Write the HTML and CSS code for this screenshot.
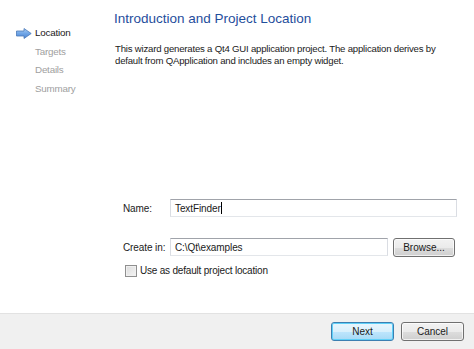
FILE: index.html
```html
<!DOCTYPE html>
<html lang="en">
<head>
    <meta charset="UTF-8">
    <title>Introduction and Project Location</title>
    <link rel="stylesheet" href="styles.css">
</head>
<body>
    <div class="wizard">
        <div class="content">
            <div class="steps">
                <div class="step current">
                    <svg class="step-arrow" width="16" height="11" viewBox="0 0 16 11" xmlns="http://www.w3.org/2000/svg">
                        <defs>
                            <linearGradient id="arrowFill" x1="0" y1="0" x2="0" y2="1">
                                <stop offset="0" stop-color="#a9cdf5"/>
                                <stop offset="0.5" stop-color="#6fa5e6"/>
                                <stop offset="1" stop-color="#4d86d4"/>
                            </linearGradient>
                        </defs>
                        <path d="M0.5 3 H8 V0.5 L15.2 5.5 L8 10.5 V8 H0.5 Z" fill="url(#arrowFill)" stroke="#4a78b8" stroke-width="0.8" stroke-linejoin="round"/>
                    </svg>
                    <span>Location</span>
                </div>
                <div class="step">Targets</div>
                <div class="step">Details</div>
                <div class="step">Summary</div>
            </div>
            <div class="page">
                <h1 class="page-title">Introduction and Project Location</h1>
                <p class="page-desc">This wizard generates a Qt4 GUI application project. The application derives by default from QApplication and includes an empty widget.</p>
                <div class="form">
                    <div class="form-row name-row">
                        <label class="form-label">Name:</label>
                        <div class="field field-name">TextFinder<span class="caret"></span></div>
                    </div>
                    <div class="form-row path-row">
                        <label class="form-label">Create in:</label>
                        <div class="field field-path">C:\Qt\examples</div>
                        <button class="btn">Browse...</button>
                    </div>
                    <div class="form-row check-row">
                        <span class="checkbox"></span>
                        <span>Use as default project location</span>
                    </div>
                </div>
            </div>
        </div>
        <div class="footer">
            <button class="btn btn-default">Next</button>
            <button class="btn">Cancel</button>
        </div>
    </div>
</body>
</html>
```

FILE: styles.css
```css
* {
    margin: 0;
    padding: 0;
    box-sizing: border-box;
}

body {
    font-family: "Liberation Sans", Arial, sans-serif;
    font-size: 10px;
    letter-spacing: -0.1px;
    color: #1a1a1a;
    background: #fff;
    width: 474px;
    height: 349px;
    overflow: hidden;
}

.wizard {
    display: flex;
    flex-direction: column;
    height: 349px;
}

.content {
    flex: 1;
    display: flex;
    flex-direction: row;
}

.steps {
    width: 114px;
    padding-top: 24px;
    display: flex;
    flex-direction: column;
}

.step {
    height: 18.5px;
    line-height: 18.5px;
    padding-left: 35px;
    color: #a0a0a0;
    font-size: 9.8px;
    letter-spacing: -0.2px;
}

.step.current {
    display: flex;
    align-items: center;
    padding-left: 16px;
    color: #1a1a1a;
}

.step-arrow {
    margin-right: 3px;
}

.page {
    flex: 1;
    display: flex;
    flex-direction: column;
    padding-top: 10px;
    padding-right: 16px;
}

.page-title {
    font-size: 13.5px;
    font-weight: normal;
    letter-spacing: 0;
    color: #1f4e9c;
    line-height: 18px;
}

.page-desc {
    margin-top: 15px;
    line-height: 12px;
    padding-left: 1px;
    padding-right: 12px;
    font-size: 9.6px;
    letter-spacing: -0.2px;
}

.form {
    margin-top: 132px;
    padding-left: 9px;
    display: flex;
    flex-direction: column;
}

.form-row {
    display: flex;
    align-items: center;
}

.name-row {
    height: 18px;
}

.path-row {
    margin-top: 21px;
    height: 18px;
}

.check-row {
    margin-top: 8px;
    height: 13px;
    padding-left: 2px;
    letter-spacing: -0.2px;
}

.form-label {
    width: 47px;
    color: #1a1a1a;
}

.field {
    height: 18px;
    border: 1px solid #abadb3;
    border-top-color: #a0a3aa;
    border-left-color: #dadde3;
    border-right-color: #dadde3;
    border-bottom-color: #e3e6ea;
    background: #fff;
    padding-left: 4px;
    display: flex;
    align-items: center;
}

.field-name {
    width: 287px;
}

.field-path {
    width: 218px;
}

.caret {
    width: 1px;
    height: 12px;
    background: #000;
}

.btn {
    font-family: "Liberation Sans", Arial, sans-serif;
    font-size: 10px;
    color: #1a1a1a;
    height: 19px;
    width: 63px;
    border: 1px solid #707070;
    border-radius: 3px;
    background: linear-gradient(to bottom, #f2f2f2 0%, #ebebeb 50%, #dddddd 51%, #cfcfcf 100%);
    box-shadow: inset 0 0 0 1px rgba(255, 255, 255, 0.7);
}

.path-row .btn {
    margin-left: 5px;
    width: 62px;
}

.checkbox {
    width: 12px;
    height: 12px;
    border: 1px solid #8f8f8f;
    background: linear-gradient(135deg, #dcdcdc 0%, #f4f4f4 100%);
    box-shadow: inset 0 0 0 1px #f0f0f0;
    margin-right: 3px;
}

.footer {
    height: 36px;
    background: #f0f0f0;
    border-top: 1px solid #e2e2e2;
    display: flex;
    justify-content: flex-end;
    align-items: center;
    gap: 7px;
    padding-right: 10px;
}

.btn-default {
    border-color: #3c7fb1;
    box-shadow: inset 0 0 0 1px #5fd0f8;
    background: linear-gradient(to bottom, #eaf6fd 0%, #d9f0fc 50%, #bee6fd 51%, #a7d9f5 100%);
}
```
